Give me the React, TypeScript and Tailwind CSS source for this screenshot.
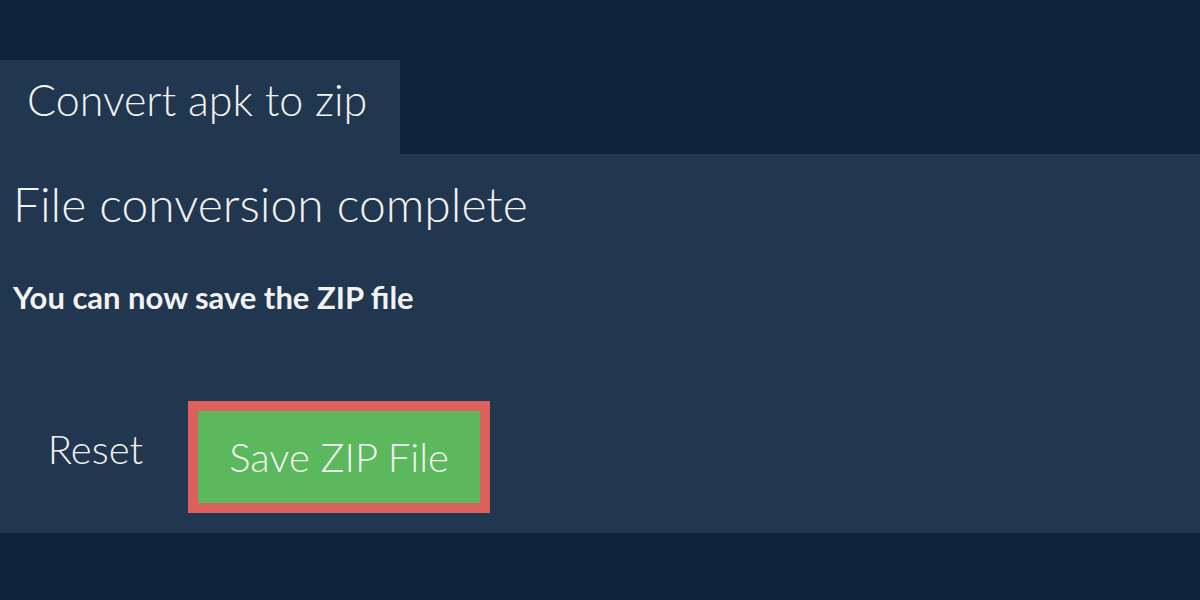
export default function App() {
  return (
    <div className="min-h-[600px] w-[1200px] bg-[#0f243a] pt-[60px] font-['Lato',sans-serif] text-[#f2f2f2]">
      <div className="flex">
        <div className="h-[94px] w-[400px] bg-[#21364f] pl-[27px] pt-[18px]">
          <h1 className="text-[43px] font-light leading-none">Convert apk to zip</h1>
        </div>
      </div>

      <div className="h-[379px] bg-[#21364f] px-[13px]">
        <h2 className="pt-[26px] text-[48px] font-light leading-none">File conversion complete</h2>
        <p className="mt-[54px] text-[31px] font-bold leading-none">You can now save the ZIP file</p>

        <div className="mt-[88px] flex items-center">
          <button className="mb-4 mr-[10px] w-[165px] text-center text-[40px] font-light leading-none">Reset</button>
          <button className="flex h-[112px] w-[302px] items-center justify-center border-[10px] border-[#dc605b] bg-[#5cb85c] text-[40px] font-light leading-none">
            Save ZIP File
          </button>
        </div>
      </div>
    </div>
  );
}
